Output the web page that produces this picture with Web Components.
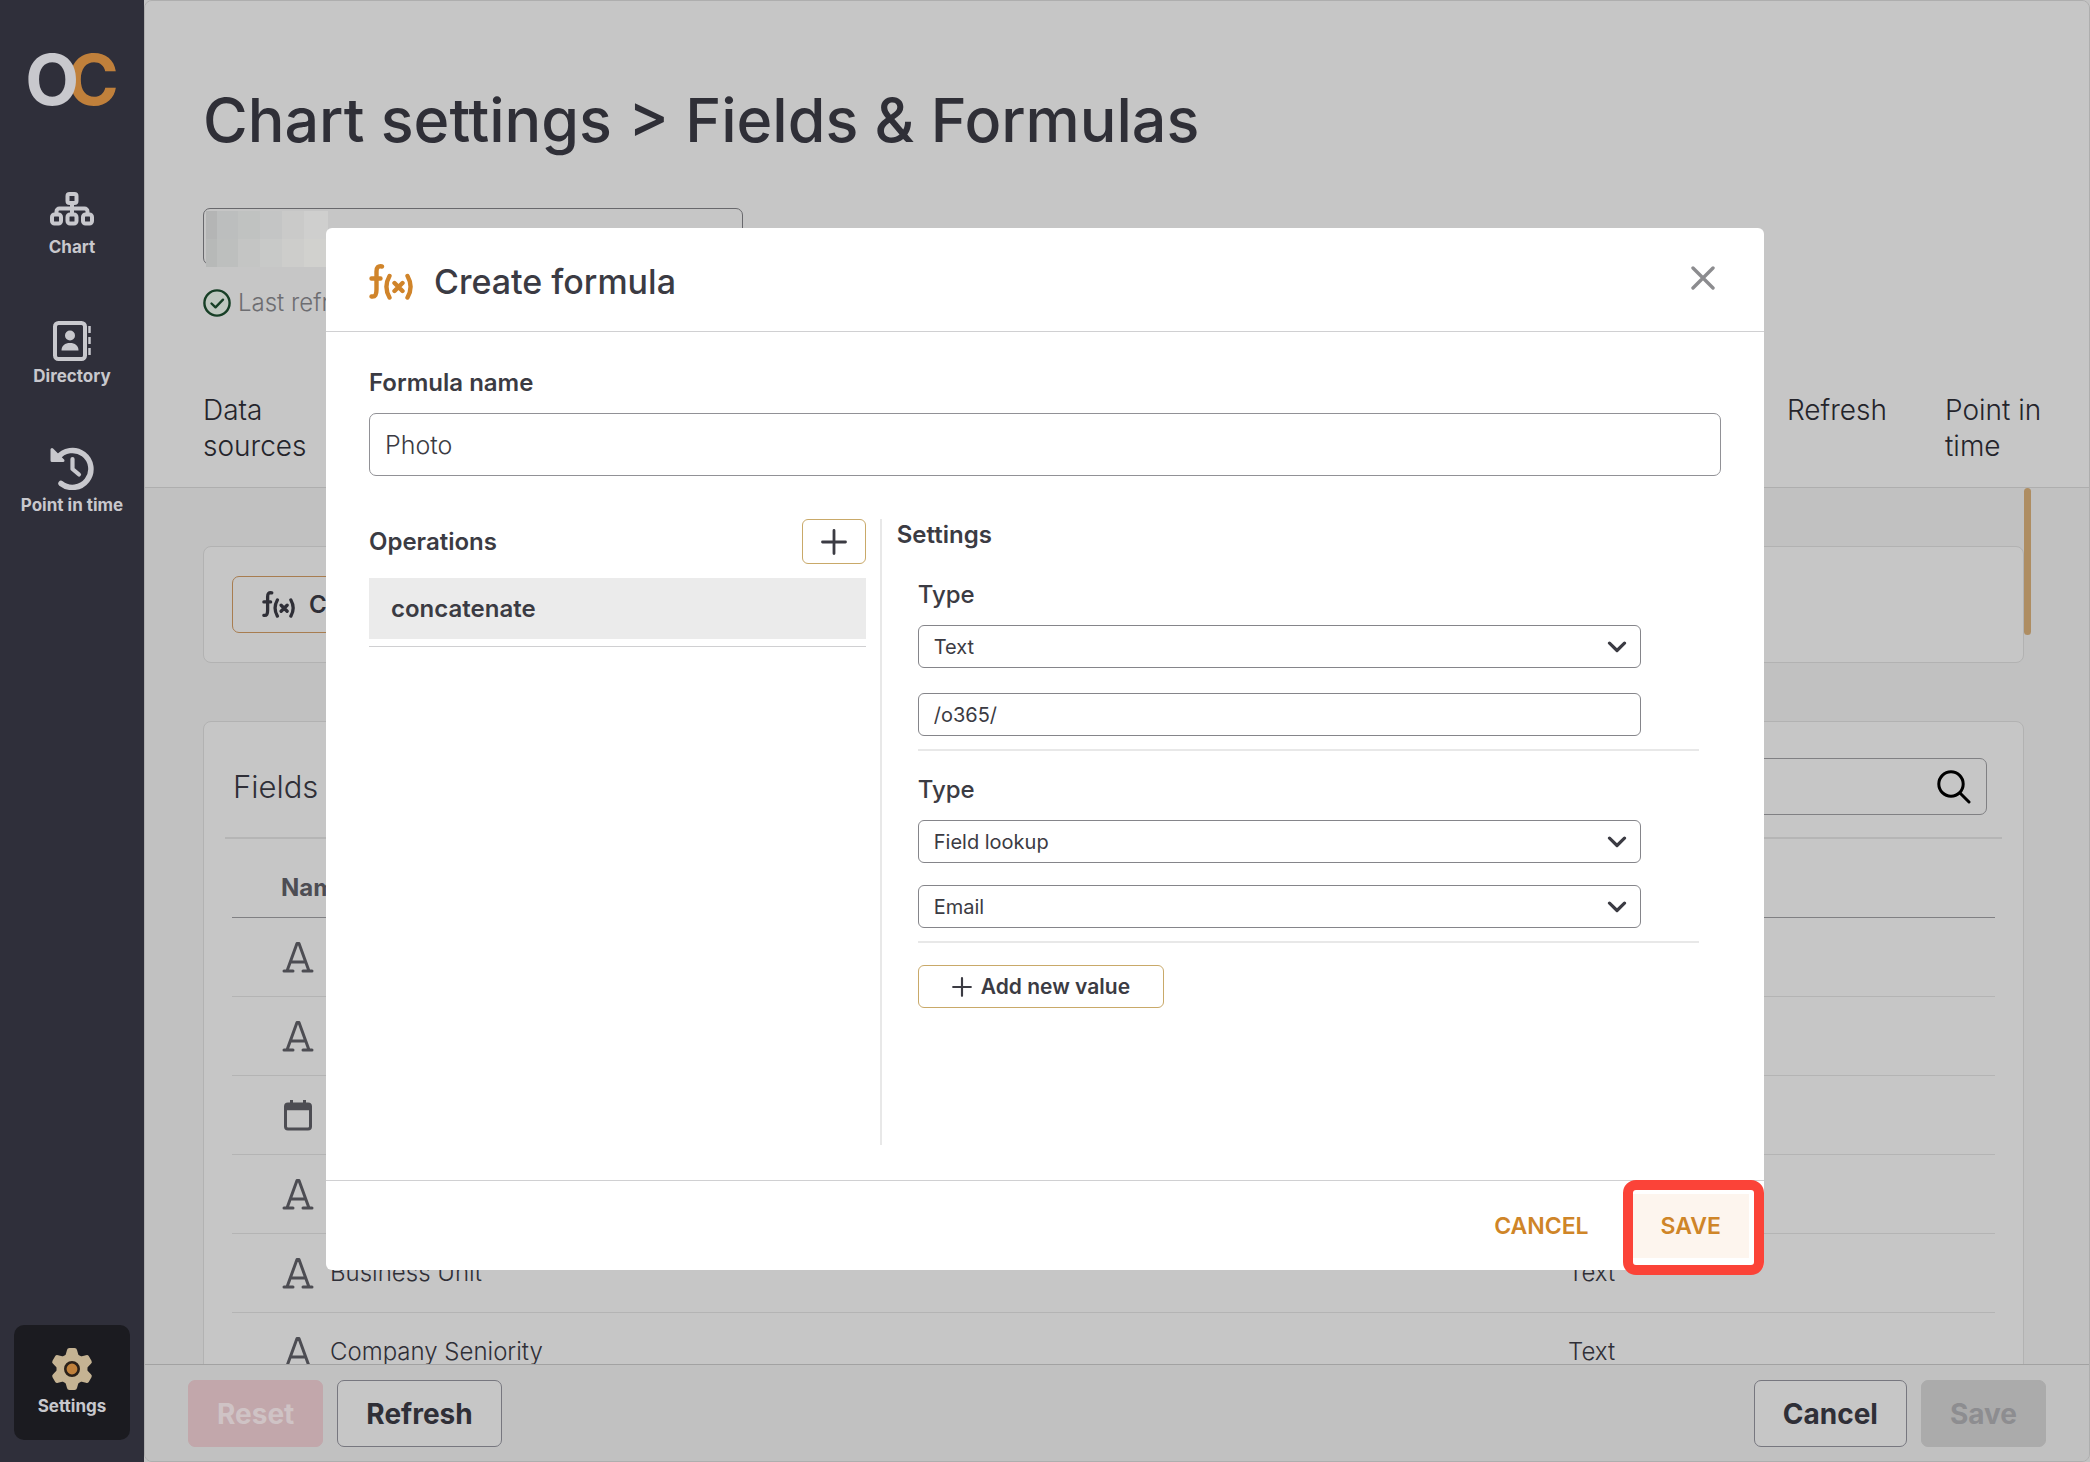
<!DOCTYPE html>
<html lang="en">
<head>
<meta charset="utf-8">
<meta name="viewport" content="width=device-width, initial-scale=1">
<title>Chart settings</title>
<style>
  html, body {
    margin: 0;
    height: 100%;
  }

  body {
    display: flex;
    background: #c3c3c3;
    color: #2f2f37;
    font-family: Inter, "Liberation Sans", sans-serif;
    overflow: hidden;
  }
</style>
</head>
<body>
<oc-sidebar>
  <oc-nav-item icon="chart">Chart</oc-nav-item>
  <oc-nav-item icon="directory">Directory</oc-nav-item>
  <oc-nav-item icon="history">Point in time</oc-nav-item>
  <oc-nav-item slot="bottom" icon="gear" active>Settings</oc-nav-item>
</oc-sidebar>

<oc-page>
  <oc-page-header slot="header"></oc-page-header>
  <oc-card>
    <oc-formula-button></oc-formula-button>
  </oc-card>
  <oc-fields-table></oc-fields-table>
  <oc-action-bar slot="footer"></oc-action-bar>
</oc-page>

<oc-formula-modal>
  <oc-value-group kind="Text" text="/o365/"></oc-value-group>
  <oc-value-group kind="Field lookup" field="Email"></oc-value-group>
</oc-formula-modal>

<script>
const ICONS = {
  chart: `<svg viewBox="0 0 44 34" fill="none" stroke="currentColor" stroke-width="4">
    <rect x="17.5" y="2" width="9" height="9" rx="2"/>
    <rect x="2" y="22.5" width="9" height="9" rx="2.5"/>
    <rect x="17.5" y="22.5" width="9" height="9" rx="2.5"/>
    <rect x="33" y="22.5" width="9" height="9" rx="2.5"/>
    <path d="M22 11v11M6.500 22v-2.500a3 3 0 0 1 3-3h25a3 3 0 0 1 3 3V22"/></svg>`,
  directory: `<svg viewBox="0 0 38 40" fill="none" stroke="currentColor" stroke-width="4">
    <rect x="2" y="2" width="30" height="36" rx="3.500"/>
    <path d="M36.500 5v7M36.500 16v7M36.500 27v7" stroke-width="2.500"/>
    <circle cx="17" cy="14.500" r="5" fill="currentColor" stroke="none"/>
    <path d="M8.500 29.500c0-5 3.500-7.500 8.500-7.500s8.500 2.500 8.500 7.500z" fill="currentColor" stroke="none"/></svg>`,
  history: `<svg viewBox="0 0 44 44" fill="none" stroke="currentColor" stroke-linecap="round" stroke-linejoin="round">
    <path d="M7.500 12A18.500 18.500 0 1 1 11 37.500" stroke-width="5.500"/>
    <path d="M2 3.500v11h11z" fill="currentColor" stroke-width="3"/>
    <path d="M22.500 13v10l6.500 5.500" stroke-width="4.200"/></svg>`,
  gear: `<svg viewBox="0 0 44 44">
    <g fill="#c5b393">
      <circle cx="22" cy="22" r="15.500"/>
      <path d="M15 10l2-7q.4-2 2.400-2h5.200q2 0 2.400 2l2 7v24l-2 7q-.4 2-2.400 2h-5.200q-2 0-2.400-2l-2-7z"/>
      <path transform="rotate(60 22 22)" d="M15 10l2-7q.4-2 2.400-2h5.200q2 0 2.400 2l2 7v24l-2 7q-.4 2-2.400 2h-5.200q-2 0-2.400-2l-2-7z"/>
      <path transform="rotate(120 22 22)" d="M15 10l2-7q.4-2 2.400-2h5.200q2 0 2.400 2l2 7v24l-2 7q-.4 2-2.400 2h-5.200q-2 0-2.400-2l-2-7z"/>
    </g>
    <circle cx="22" cy="22" r="6.700" fill="#c0803b" stroke="#2a2019" stroke-width="2.600"/></svg>`,
  check: `<svg viewBox="0 0 28 28" fill="none" stroke="#173f26" stroke-width="2.400" stroke-linecap="round" stroke-linejoin="round">
    <circle cx="14" cy="14" r="12.600" fill="#bfc8c0"/><path d="M8.500 14.500l4 3.800 7.500-7.600"/></svg>`,
  fx: `<svg viewBox="0 0 44 36" fill="none" stroke="currentColor" stroke-width="4.400" stroke-linecap="round" stroke-linejoin="round">
    <path d="M13 2.500c-4-.8-5.500 1-5.500 5v18c0 5-1 7.500-5 7M2.500 14.500h9"/>
    <path d="M20.500 12c-4 7-4 14.500 0 21.500M38.500 12c4 7 4 14.500 0 21.500M25.500 19l8 8M33.500 19l-8 8"/></svg>`,
  close: `<svg viewBox="0 0 24 24" fill="none" stroke="currentColor" stroke-width="3.400" stroke-linecap="round">
    <path d="M2 2l20 20M22 2L2 22"/></svg>`,
  plus: `<svg viewBox="0 0 26 26" fill="none" stroke="currentColor" stroke-width="2.800" stroke-linecap="round">
    <path d="M13 1.500v23M1.500 13h23"/></svg>`,
  chevron: `<svg viewBox="0 0 20 12" fill="none" stroke="currentColor" stroke-width="3.200" stroke-linecap="round" stroke-linejoin="round">
    <path d="M2.500 2.200l7.500 7.300 7.500-7.300"/></svg>`,
  search: `<svg viewBox="0 0 34 34" fill="none" stroke="#000" stroke-width="3" stroke-linecap="round">
    <circle cx="14" cy="14" r="12.200"/><path d="M23 23l9 9"/></svg>`,
  text: `<svg viewBox="0 0 32 32" fill="none" stroke="currentColor" stroke-width="3" stroke-linecap="round" stroke-linejoin="round">
    <path d="M5 30L15 2.500h2L27 30M9 21h14M2 30h9M21 30h9"/></svg>`,
  date: `<svg viewBox="0 0 32 32" fill="none" stroke="currentColor" stroke-width="3">
    <rect x="3.500" y="5" width="25" height="25" rx="2.500"/><path d="M3.500 8.500h25" stroke-width="5.500"/>
    <path d="M9.500 1v4M22.500 1v4"/></svg>`,
};

class OcIcon extends HTMLElement {
  connectedCallback() {
    this.attachShadow({ mode: "open" });
    this.shadowRoot.innerHTML = `
      <style>
        :host { display: inline-flex; flex: none; }
        svg { display: block; width: 100%; height: 100%; }
      </style>
      ${ICONS[this.getAttribute("name")]}
    `;
  }
}

class OcSidebar extends HTMLElement {
  connectedCallback() {
    this.attachShadow({ mode: "open" });
    this.shadowRoot.innerHTML = `
      <style>
        :host {
          display: flex;
          flex-direction: column;
          flex: none;
          box-sizing: border-box;
          width: 144px;
          padding: 44px 14px 22px;
          background: #2f2f3a;
          color: #c8c8cd;
        }
        .logo {
          display: flex;
          justify-content: center;
          font-size: 70px;
          line-height: 72px;
          font-weight: 700;
          text-decoration: none;
          color: #c8c8cd;
        }
        .logo span:first-child { z-index: 1; }
        .logo span:last-child { margin-left: -12px; color: #c0803b; }
        nav {
          display: flex;
          flex-direction: column;
          flex: 1;
          gap: 14px;
          padding-top: 50px;
        }
        .bottom { margin-top: auto; }
      </style>
      <a class="logo" href="#"><span>O</span><span>C</span></a>
      <nav>
        <slot></slot>
        <div class="bottom"><slot name="bottom"></slot></div>
      </nav>
    `;
  }
}

class OcNavItem extends HTMLElement {
  connectedCallback() {
    this.attachShadow({ mode: "open" });
    this.shadowRoot.innerHTML = `
      <style>
        :host { display: block; }
        a {
          display: flex;
          flex-direction: column;
          align-items: center;
          justify-content: flex-end;
          box-sizing: border-box;
          height: 115px;
          padding-bottom: 22px;
          gap: 3px;
          border-radius: 10px;
          color: inherit;
          font-size: 17px;
          line-height: 24px;
          font-weight: 700;
          white-space: nowrap;
          text-decoration: none;
        }
        oc-icon { width: 44px; height: 44px; }
        oc-icon[name="chart"] { height: 34px; margin-bottom: 6px; }
        oc-icon[name="directory"] { width: 38px; height: 40px; }
        :host([active]) a { background: #1b1b20; }
      </style>
      <a href="#"><oc-icon name="${this.getAttribute("icon")}"></oc-icon><slot></slot></a>
    `;
  }
}

class OcPage extends HTMLElement {
  connectedCallback() {
    this.attachShadow({ mode: "open" });
    this.shadowRoot.innerHTML = `
      <style>
        :host {
          display: flex;
          flex-direction: column;
          flex: 1;
          min-width: 0;
          box-sizing: border-box;
          height: 100vh;
          border: 1px solid #aeaeae;
          border-radius: 8px;
          background: #c1c1c1;
          overflow: hidden;
        }
        main {
          flex: 1;
          min-height: 0;
          position: relative;
          padding: 58px 65px 0 58px;
          overflow: hidden;
        }
        .content { display: flex; flex-direction: column; gap: 58px; }
        .thumb {
          position: absolute;
          top: 0;
          right: 58px;
          width: 7px;
          height: 147px;
          border-radius: 4px;
          background: #ae8d62;
        }
      </style>
      <slot name="header"></slot>
      <main>
        <div class="content"><slot></slot></div>
        <div class="thumb"></div>
      </main>
      <slot name="footer"></slot>
    `;
  }
}

class OcPageHeader extends HTMLElement {
  connectedCallback() {
    this.attachShadow({ mode: "open" });
    this.shadowRoot.innerHTML = `
      <style>
        :host {
          display: block;
          padding: 83px 40px 23px 58px;
          border-bottom: 1px solid #aeaeae;
          background: #c6c6c6;
        }
        h1 {
          margin: 0 0 52px;
          font-size: 61px;
          line-height: 72px;
          font-weight: 500;
        }
        .picker {
          position: relative;
          box-sizing: border-box;
          width: 540px;
          height: 57px;
          padding: 2px;
          border: 1px solid #68686c;
          border-radius: 7px;
        }
        /* redacted chart name */
        .mosaic {
          display: grid;
          grid-template-columns: 11px 21px 22px 22px 22px 24px;
          height: 56px;
        }
        .status {
          display: flex;
          align-items: center;
          gap: 7px;
          margin: 24px 0 75px;
          color: #6d6d71;
          font-size: 24px;
          line-height: 28px;
          font-weight: 300;
        }
        .status oc-icon { width: 28px; height: 28px; }
        nav { display: flex; gap: 58px; }
        nav a {
          max-width: 104px;
          color: #24242b;
          font-size: 28px;
          line-height: 36px;
          font-weight: 300;
          text-decoration: none;
        }
        nav a:nth-child(2) { margin-left: auto; }
      </style>
      <h1>Chart settings &gt; Fields &amp; Formulas</h1>
      <div class="picker"><div class="mosaic"></div></div>
      <div class="status"><oc-icon name="check"></oc-icon><span>Last refreshed</span></div>
      <nav><a href="#">Data sources</a><a href="#">Refresh</a><a href="#">Point in time</a></nav>
    `;
    const mosaic = this.shadowRoot.querySelector(".mosaic");
    for (const shade of ["#b4b5b5", "#bcbebe", "#c0c2c1", "#c4c5c5", "#cacac9", "#cfcfce",
      "#b7b9b8", "#bdbfbe", "#c4c5c4", "#c8c9c8", "#cdcdcb", "#d1d1ce"]) {
      const tile = document.createElement("span");
      tile.style.background = shade;
      mosaic.append(tile);
    }
  }
}

class OcCard extends HTMLElement {
  connectedCallback() {
    this.attachShadow({ mode: "open" });
    this.shadowRoot.innerHTML = `
      <style>
        :host {
          display: block;
          padding: 29px 28px;
          border: 1px solid #b2b2b2;
          border-radius: 8px;
          background: #c6c6c6;
        }
      </style>
      <slot></slot>
    `;
  }
}

class OcFormulaButton extends HTMLElement {
  connectedCallback() {
    this.attachShadow({ mode: "open" });
    this.shadowRoot.innerHTML = `
      <style>
        :host { display: block; }
        button {
          display: flex;
          align-items: center;
          gap: 14px;
          height: 57px;
          padding: 0 29px;
          border: 1px solid #a87d50;
          border-radius: 7px;
          background: none;
          color: #2f2f37;
          font: 600 24px/32px Inter, sans-serif;
        }
        oc-icon { width: 33px; height: 27px; }
      </style>
      <button type="button"><oc-icon name="fx"></oc-icon>Create formula</button>
    `;
  }
}

class OcFieldsTable extends HTMLElement {
  connectedCallback() {
    // the first rows sit behind the dialog
    const rows = [
      ["text", "", ""],
      ["text", "", ""],
      ["date", "", ""],
      ["text", "", ""],
      ["text", "Business Unit", "Text"],
      ["text", "Company Seniority", "Text"],
    ];
    this.attachShadow({ mode: "open" });
    this.shadowRoot.innerHTML = `
      <style>
        :host {
          display: block;
          padding: 36px 21px 0;
          border: 1px solid #b2b2b2;
          border-radius: 8px;
          background: #c6c6c6;
        }
        header {
          display: flex;
          align-items: center;
          justify-content: space-between;
          padding: 0 15px 22px 8px;
          border-bottom: 2px solid #b5b5b5;
        }
        h2 { margin: 0; font-size: 31px; line-height: 36px; font-weight: 300; }
        .search {
          display: flex;
          align-items: center;
          box-sizing: border-box;
          width: 480px;
          height: 57px;
          padding: 0 15px;
          border: 1px solid #808083;
          border-radius: 7px;
        }
        .search input { flex: 1; border: 0; outline: 0; background: none; font: inherit; }
        .search oc-icon { width: 34px; height: 34px; }
        .table { padding: 0 7px; }
        table { width: 100%; border-collapse: collapse; table-layout: fixed; }
        th, td {
          box-sizing: border-box;
          height: 79px;
          padding: 0 0 0 50px;
          border-bottom: 1px solid #b4b4b4;
          text-align: left;
          font-size: 24px;
          line-height: 32px;
          font-weight: 300;
        }
        th {
          height: 78px;
          padding: 20px 0 0 49px;
          border-bottom-color: #808083;
          color: #4d4d53;
          font-weight: 700;
        }
        th:last-child, td:last-child { width: 427px; padding-left: 0; }
        .name { display: flex; align-items: center; gap: 16px; }
        .name oc-icon { width: 32px; height: 32px; color: #4d4d53; }
      </style>
      <header>
        <h2>Fields</h2>
        <label class="search"><input type="search" aria-label="Search fields"><oc-icon name="search"></oc-icon></label>
      </header>
      <div class="table">
        <table>
          <thead><tr><th>Name</th><th></th></tr></thead>
          <tbody>
            ${rows.map(([icon, name, type]) => `
              <tr><td><div class="name"><oc-icon name="${icon}"></oc-icon>${name}</div></td><td>${type}</td></tr>
            `).join("")}
          </tbody>
        </table>
      </div>
    `;
  }
}

class OcActionBar extends HTMLElement {
  connectedCallback() {
    this.attachShadow({ mode: "open" });
    this.shadowRoot.innerHTML = `
      <style>
        :host {
          display: flex;
          gap: 14px;
          padding: 15px 43px 14px;
          border-top: 1px solid #a2a2a2;
          background: #c1c1c1;
        }
        button {
          height: 67px;
          padding: 0 28px;
          border: 1px solid #77777f;
          border-radius: 7px;
          background: #c6c6c6;
          color: #2f2f37;
          font: 700 28px/36px Inter, sans-serif;
        }
        .reset { border-color: #c2a7ab; background: #c2a7ab; color: #cfc3c5; }
        .cancel { margin-left: auto; }
        .save { border-color: #ababab; background: #ababab; color: #8d8d90; }
      </style>
      <button class="reset" type="button">Reset</button>
      <button type="button">Refresh</button>
      <button class="cancel" type="button">Cancel</button>
      <button class="save" type="button">Save</button>
    `;
  }
}

class OcValueGroup extends HTMLElement {
  connectedCallback() {
    const kind = this.getAttribute("kind");
    const field = this.getAttribute("field");
    const value = field
      ? this.select("value", field, `aria-label="Field"`)
      : `<input type="text" aria-label="Value" value="${this.getAttribute("text")}">`;
    this.attachShadow({ mode: "open" });
    this.shadowRoot.innerHTML = `
      <style>
        :host {
          display: block;
          padding: 0 58px 13px 0;
          border-bottom: 2px solid #e8e8e8;
        }
        label {
          display: block;
          margin-bottom: 13px;
          font-size: 24px;
          line-height: 34px;
          font-weight: 500;
        }
        .select { display: grid; align-items: center; }
        .select > * { grid-area: 1 / 1; }
        .select oc-icon {
          width: 20px;
          height: 12px;
          margin-right: 14px;
          justify-self: end;
          pointer-events: none;
        }
        .select + .select { margin-top: 22px; }
        select, input {
          appearance: none;
          box-sizing: border-box;
          width: 100%;
          height: 43px;
          padding: 0 15px;
          border: 1px solid #85858a;
          border-radius: 6px;
          background: #fff;
          color: #3b3b43;
          font: 400 20px/28px Inter, sans-serif;
        }
        input { display: block; margin-top: 25px; }
      </style>
      <label for="type">Type</label>
      ${this.select("type", kind, "")}
      ${value}
    `;
  }

  select(id, value, attrs) {
    return `<div class="select">
      <select id="${id}" ${attrs}><option>${value}</option></select>
      <oc-icon name="chevron"></oc-icon>
    </div>`;
  }
}

class OcFormulaModal extends HTMLElement {
  connectedCallback() {
    this.attachShadow({ mode: "open" });
    this.shadowRoot.innerHTML = `
      <style>
        :host {
          position: fixed;
          inset: 0;
          z-index: 10;
          display: flex;
          align-items: center;
          justify-content: center;
          padding-top: 36px;
          color: #3b3b43;
        }
        .dialog {
          width: min(1438px, 92vw);
          border-radius: 6px;
          background: #fff;
        }
        header {
          display: flex;
          align-items: center;
          padding: 32px 43px 27px;
          border-bottom: 1px solid #d0d0d2;
        }
        header > oc-icon { width: 44px; height: 36px; margin-right: 21px; color: #d0842a; }
        h2 { margin: 0; font-size: 34px; line-height: 44px; font-weight: 500; }
        button {
          border: 0;
          background: none;
          color: inherit;
          font: 600 24px/32px Inter, sans-serif;
        }
        .close {
          display: flex;
          align-self: flex-start;
          margin-left: auto;
          padding: 6px;
          color: #8c8c8f;
        }
        .close oc-icon { width: 24px; height: 24px; }
        .body { padding: 35px 43px; }
        label, h3 {
          display: block;
          margin: 0;
          font-size: 24px;
          line-height: 32px;
          font-weight: 600;
        }
        .name {
          display: block;
          box-sizing: border-box;
          width: 100%;
          height: 63px;
          margin: 14px 0 43px;
          padding: 0 15px;
          border: 1px solid #919196;
          border-radius: 7px;
          color: #3b3b43;
          font: 300 25px/32px Inter, sans-serif;
        }
        .columns { display: grid; grid-template-columns: 17fr 28fr; min-height: 626px; }
        .operations { padding-right: 14px; }
        .bar { display: flex; align-items: center; justify-content: space-between; height: 45px; }
        .outlined {
          display: flex;
          align-items: center;
          justify-content: center;
          box-sizing: border-box;
          border: 1px solid #c9a969;
          border-radius: 6px;
        }
        .add-op { width: 64px; height: 45px; }
        .add-op oc-icon { width: 26px; height: 26px; }
        ul {
          margin: 14px 0 0;
          padding: 0 0 7px;
          border-bottom: 1px solid #d0d0d2;
          list-style: none;
        }
        li {
          padding: 15px 22px 14px;
          background: #ebebeb;
          font-size: 24px;
          line-height: 32px;
          font-weight: 600;
        }
        .settings { padding-left: 15px; border-left: 2px solid #e8e8e8; }
        .values {
          display: flex;
          flex-direction: column;
          gap: 22px;
          padding: 27px 22px 0 21px;
        }
        .add-value {
          align-self: flex-start;
          gap: 9px;
          height: 43px;
          padding: 0 33px;
          font-size: 21px;
          line-height: 28px;
        }
        .add-value oc-icon { width: 20px; height: 20px; }
        footer {
          display: flex;
          justify-content: flex-end;
          gap: 16px;
          padding: 13px 15px 12px;
          border-top: 1px solid #d0d0d2;
        }
        footer button {
          height: 64px;
          padding: 0 28px;
          color: #cf8528;
          font-size: 23px;
        }
        .save { background: #fdf5ee; }
        .marked { position: relative; display: flex; }
        .marked::after {
          content: "";
          position: absolute;
          inset: -14px -15px -17px -10px;
          border: 10px solid #fb4338;
          border-radius: 13px;
        }
      </style>
      <div class="dialog" role="dialog" aria-labelledby="title">
        <header>
          <oc-icon name="fx"></oc-icon>
          <h2 id="title">Create formula</h2>
          <button class="close" type="button" aria-label="Close"><oc-icon name="close"></oc-icon></button>
        </header>
        <div class="body">
          <label for="name">Formula name</label>
          <input class="name" id="name" type="text" value="Photo">
          <div class="columns">
            <section class="operations">
              <div class="bar">
                <h3>Operations</h3>
                <button class="outlined add-op" type="button" aria-label="Add operation"><oc-icon name="plus"></oc-icon></button>
              </div>
              <ul><li>concatenate</li></ul>
            </section>
            <section class="settings">
              <h3>Settings</h3>
              <div class="values">
                <slot></slot>
                <button class="outlined add-value" type="button"><oc-icon name="plus"></oc-icon>Add new value</button>
              </div>
            </section>
          </div>
        </div>
        <footer>
          <button type="button">CANCEL</button>
          <div class="marked"><button class="save" type="button">SAVE</button></div>
        </footer>
      </div>
    `;
  }
}

customElements.define("oc-icon", OcIcon);
customElements.define("oc-sidebar", OcSidebar);
customElements.define("oc-nav-item", OcNavItem);
customElements.define("oc-page", OcPage);
customElements.define("oc-page-header", OcPageHeader);
customElements.define("oc-card", OcCard);
customElements.define("oc-formula-button", OcFormulaButton);
customElements.define("oc-fields-table", OcFieldsTable);
customElements.define("oc-action-bar", OcActionBar);
customElements.define("oc-value-group", OcValueGroup);
customElements.define("oc-formula-modal", OcFormulaModal);
</script>
</body>
</html>
